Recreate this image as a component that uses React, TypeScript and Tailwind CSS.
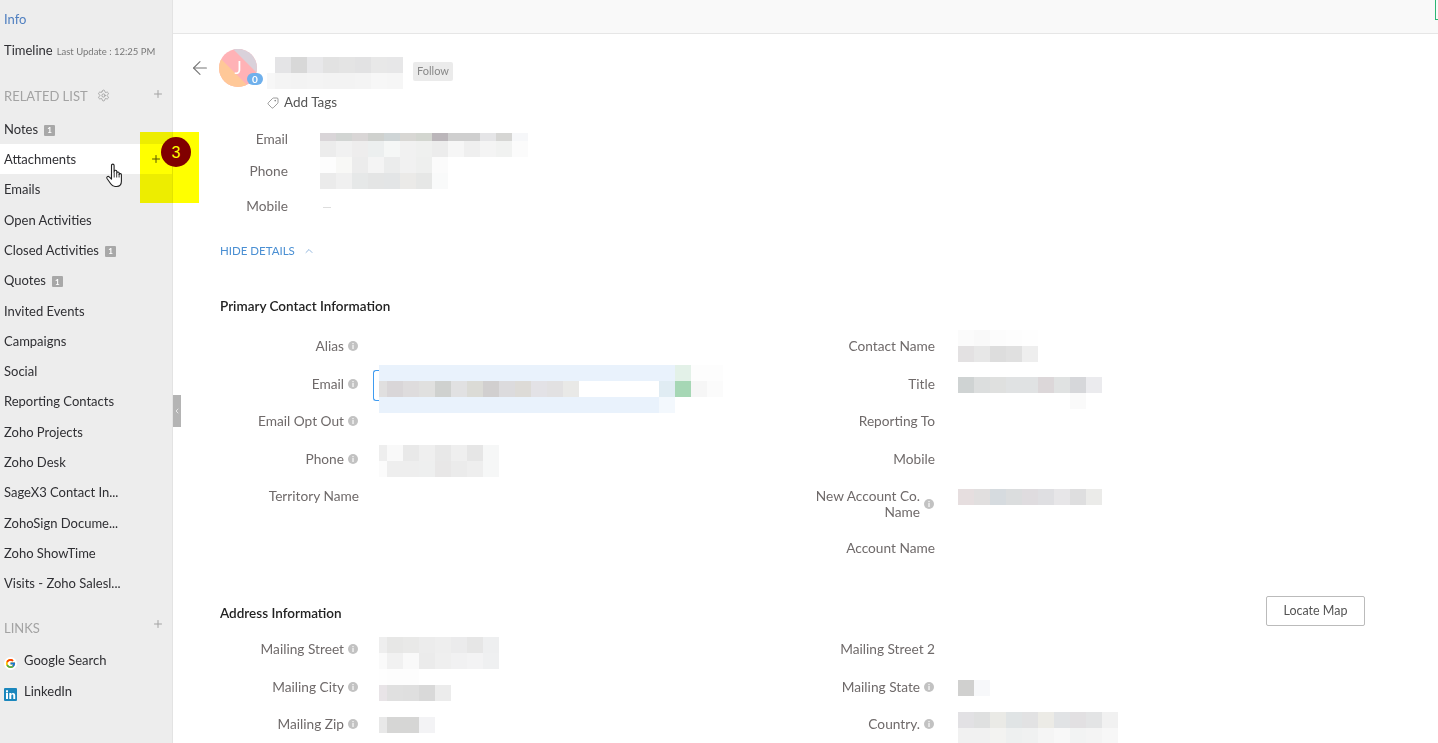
import React from "react";
import { Plus, Settings, ChevronUp, ArrowLeft, Tag, ChevronLeft } from "lucide-react";
import { FcGoogle } from "react-icons/fc";

type MRow = { c: string[]; first?: number; h?: number; skip?: number };

function Mosaic({ rows, top = 0, size = 16 }: { rows: MRow[]; top?: number; size?: number }) {
  return (
    <div className="flex flex-col" style={{ marginTop: top }}>
      {rows.map((r, i) => (
        <div key={i} className="flex shrink-0" style={{ height: r.h ?? size, marginLeft: r.skip ?? 0 }}>
          {r.c.map((col, j) => (
            <div
              key={j}
              className="shrink-0"
              style={{ backgroundColor: "#" + col, width: j === 0 && r.first ? r.first : size }}
            />
          ))}
        </div>
      ))}
    </div>
  );
}

function Info() {
  return (
    <span className="mr-[1px] inline-flex h-[10px] w-[10px] shrink-0 items-center justify-center rounded-full bg-[#c2c2c2] text-[8px] font-bold leading-none text-white">
      i
    </span>
  );
}

function Field({
  label,
  info,
  h = 37.5,
  children,
  right,
}: {
  label: React.ReactNode;
  info?: boolean;
  h?: number;
  children?: React.ReactNode;
  right?: boolean;
}) {
  return (
    <div className="flex" style={{ height: h }}>
      <div className="flex w-[139px] shrink-0 items-center justify-end gap-[4px] self-start text-right text-[13.7px] leading-[16px] text-[#6f6a6a]">
        <span className="py-[2px]">{label}</span>
        {info && <Info />}
      </div>
      <div className={right ? "ml-[23px] min-w-0" : "ml-[20px] min-w-0"}>{children}</div>
    </div>
  );
}

function SideRow({
  label,
  badge,
  active,
}: {
  label: string;
  badge?: boolean;
  active?: boolean;
}) {
  return (
    <div className={`flex h-[30.3px] items-center pl-[4px] pt-[2px] ${active ? "bg-white" : ""}`}>
      <span className="text-[13px] text-[#2f2f33]">{label}</span>
      {badge && (
        <span className="ml-[6px] mt-[1px] flex h-[11px] w-[11px] items-center justify-center rounded-[1px] bg-[#a8a8a8] text-[8px] font-bold leading-none text-white">
          1
        </span>
      )}
      {active && <Plus className="ml-auto mr-[10px] -mt-[2px] text-[#555]" size={12} strokeWidth={2} />}
    </div>
  );
}

const items: { label: string; badge?: boolean; active?: boolean }[] = [
  { label: "Notes", badge: true },
  { label: "Attachments", active: true },
  { label: "Emails" },
  { label: "Open Activities" },
  { label: "Closed Activities", badge: true },
  { label: "Quotes", badge: true },
  { label: "Invited Events" },
  { label: "Campaigns" },
  { label: "Social" },
  { label: "Reporting Contacts" },
  { label: "Zoho Projects" },
  { label: "Zoho Desk" },
  { label: "SageX3 Contact In..." },
  { label: "ZohoSign Docume..." },
  { label: "Zoho ShowTime" },
  { label: "Visits - Zoho Salesl..." },
];

function Sidebar() {
  return (
    <aside className="relative h-[743px] w-[173px] shrink-0 border-r border-[#e3e3e3] bg-[#ededed]">
      <div className="flex h-[38px] items-center pl-[4px] pt-[2px] text-[13px] text-[#4f7fc0]">Info</div>
      <div className="flex h-[24px] items-center pl-[4px] pt-[2px]">
        <span className="text-[13px] text-[#2f2f33]">Timeline</span>
        <span className="ml-[4px] mt-[2px] text-[9.5px] text-[#777]">Last Update : 12:25 PM</span>
      </div>
      <div className="mt-[22px] flex h-[24px] items-center pl-[4px] pt-[2px]">
        <span className="text-[13px] text-[#a3a3a3]">RELATED LIST</span>
        <Settings className="ml-[9px] -mt-[4px] text-[#999]" size={13} strokeWidth={1.5} />
        <Plus className="ml-auto mr-[8px] -mt-[6px] text-[#a3a3a3]" size={12} strokeWidth={2} />
      </div>
      <div className="mt-[5.4px]">
        {items.map((it) => (
          <SideRow key={it.label} {...it} />
        ))}
      </div>
      <div className="mt-[17.9px] flex h-[24px] items-center pl-[4px] pt-[2px]">
        <span className="text-[13px] text-[#a3a3a3]">LINKS</span>
        <Plus className="ml-auto mr-[8px] -mt-[10px] text-[#a3a3a3]" size={12} strokeWidth={2} />
      </div>
      <div className="mt-[5px] flex h-[31px] items-center pl-[4px]">
        <span className="mt-[5px] flex h-[13px] w-[13px] items-center justify-center rounded-full bg-white">
          <FcGoogle size={11} />
        </span>
        <span className="ml-[7px] text-[13px] text-[#2f2f33]">Google Search</span>
      </div>
      <div className="flex h-[31px] items-center pl-[4px]">
        <svg className="mt-[5px]" width="13" height="13" viewBox="0 0 13 13">
          <rect width="13" height="13" rx="1" fill="#1b87bd" />
          <rect x="2" y="5" width="2" height="6" fill="#fff" />
          <rect x="2" y="2.3" width="2" height="2" fill="#fff" />
          <path d="M5.3 5h1.9v.9C7.600 5.300 8.300 4.900 9.100 4.900c1.500 0 2.100.9 2.100 2.400V11H9.300V7.700c0-.7-.3-1.200-.9-1.200s-1.100.5-1.100 1.200V11H5.300z" fill="#fff" />
        </svg>
        <span className="ml-[7px] text-[13px] text-[#2f2f33]">LinkedIn</span>
      </div>

      <div className="absolute left-[173px] top-[395px] flex h-[32px] w-[8px] items-center justify-center bg-[#b4b4b4] text-white">
        <ChevronLeft size={8} strokeWidth={2} />
      </div>
    </aside>
  );
}

function Avatar() {
  return (
    <div className="relative h-[38px] w-[38px] shrink-0">
      <svg width="38" height="38" viewBox="0 0 38 38" className="block">
        <defs>
          <clipPath id="av">
            <circle cx="19" cy="19" r="19" />
          </clipPath>
        </defs>
        <g clipPath="url(#av)">
          <rect width="38" height="38" fill="#ffb2b6" />
          <path d="M14 0 L38 0 L38 24 Z" fill="#d9d1da" />
          <path d="M0 8 L30 38 L0 38 Z" fill="#ffc898" />
        </g>
      </svg>
      <span className="absolute inset-0 flex items-center justify-center text-[17px] text-white">J</span>
      <span className="absolute left-[28px] top-[24px] flex h-[12px] w-[16px] items-center justify-center rounded-full bg-[#6fb0ec] text-[10px] font-bold leading-none text-white">
        0
      </span>
    </div>
  );
}

const f = (s: string) => s.split(" ");

function Main() {
  return (
    <main className="relative min-w-0 flex-1">
      <div className="h-[34px] border-b border-[#e6e6e6] bg-[#f9f9f9]" />
      <div className="absolute right-0 top-0 h-[20px] w-[3px] border-b border-l border-[#2bb673]" />

      <div className="flex pl-[16px] pt-[15px]">
        <ArrowLeft className="mt-[8px] text-[#777]" size={22} strokeWidth={1.2} />
        <div className="ml-[8px]">
          <Avatar />
        </div>
        <div className="ml-[10px] mt-[8px] flex flex-col">
          <Mosaic
            rows={[
              { skip: 8, c: f("e4e4e6 d8d8d8 e8e8ea e2e2e2 e4e4e4 e2e2e3 e8e8e8 e7e7e8") },
              { first: 8, c: f("f7f7f7 f4f4f4 f3f3f3 f4f4f4 f3f3f3 f3f3f3 f4f4f4 f7f7f7 f6f6f6") },
            ]}
          />
        </div>
        <div className="ml-[10px] mt-[13px] flex h-[19px] w-[40px] items-center justify-center rounded-[2px] bg-[#ebebeb] text-[11px] text-[#888]">
          Follow
        </div>
      </div>
      <div className="mt-[1px] flex h-[25px] items-center pl-[94px] text-[13.5px] text-[#555]">
        <Tag className="-scale-x-100 text-[#666]" size={12} strokeWidth={1.3} />
        <span className="ml-[5px]">Add Tags</span>
      </div>

      <div className="mt-[14px] flex">
        <div className="flex w-[115px] flex-col items-end text-[13.7px] leading-[20px] text-[#6f6a6a]">
          <div className="h-[32px]">Email</div>
          <div className="h-[35px]">Phone</div>
          <div>Mobile</div>
        </div>
        <div className="ml-[32px] mt-[4px] flex flex-col">
          <Mosaic
            rows={[
              { h: 8, c: f("d9d5d8 d2d5d3 d9d6d6 cfd1ce cfd5d6 d8d7d4 d3d6d0 bbb6ba cfcfcf cfcfcf e5e5e7 d6d6d4 f6f7f9") },
              { c: f("ececec f1f1f1 eeeded ecefef f5f7f6 f1f1f1 eff0ef ececec f6f6f6 efefef f4f4f4 f1f2f1 fbfbfb") },
              { c: f("fdfdfd f8f8f6 ececec f4f4f4 ebecec f1f1f1 eeefee fbfbfb") },
              { c: f("ebebeb f0f0f0 e6e8e8 e4e5e5 e3e5e6 ebeae8 e6e7e6 f9fafa") },
            ]}
          />
          <div className="ml-[3px] mt-[18px] h-px w-[8px] bg-[#dddddd]" />
        </div>
      </div>

      <div className="mt-[26px] flex h-[18px] items-center pl-[47px] text-[11.5px] text-[#4a8fd3]">
        HIDE DETAILS
        <ChevronUp className="ml-[8px] text-[#6f9fd3]" size={12} strokeWidth={1.5} />
      </div>

      <h2 className="mt-[36px] pl-[47px] text-[13.5px] font-semibold leading-[20px] text-[#222]">
        Primary Contact Information
      </h2>

      <div className="mt-[20px] flex pl-[47px]">
        <div className="w-[576px] shrink-0">
          <Field label="Alias" info />
          <Field label="Email" info>
            <div className="flex">
              <div className="-ml-[6px] mt-[-4px] h-[31px] w-[6px] shrink-0 rounded-l-[3px] border-y border-l border-[#3f9bf0]" />
              <Mosaic
                top={-9}
                rows={[
                  { c: [...Array(19).fill("e9f2fc"), "e3f1e8", "fdfdfd", "fdfdfd"], first: 8 },
                  {
                    first: 8,
                    c: f("e0dfdf d9d6d8 dedcdd e0e0df cfd1cf e1e1e2 dbdbd6 d1cfcf dcdbdd dddbd7 e3e2e6 e2e1e2 e9e9e7 ffffff ffffff ffffff ffffff ffffff e0ecf3 a6d7b5 f6f6f6 fbfbfb"),
                  },
                  { first: 8, c: [...Array(18).fill("e9f2fc"), "f3f8fd"] },
                ]}
              />
            </div>
          </Field>
          <Field label="Email Opt Out" info />
          <Field label="Phone" info>
            <Mosaic
              top={-4}
              rows={[
                { first: 8, c: f("eeeeee f9f9f9 e9e9e9 efefef e8e8e8 efefef e6e6e6 f6f7f7") },
                { first: 8, c: f("fbfbfb eeeeee eeeeee eeefef e8e7e7 ebebeb eeeeee f6f7f7") },
              ]}
            />
          </Field>
          <Field label="Territory Name" />
        </div>
        <div className="w-[500px] shrink-0">
          <Field label="Contact Name" right>
            <Mosaic
              top={-6}
              rows={[
                { c: f("fbfbfb f9f9f9 fcfcfc fdfdfd fefefe") },
                { c: f("e3e1e2 e7e7e7 dddddd e0e0e0 eeeeee") },
              ]}
            />
          </Field>
          <Field label="Title" right>
            <Mosaic
              top={3}
              rows={[
                { c: f("cfd3d3 dcdede dfe0df e0e2e3 e0e2e3 dcd7d9 e0e2e2 d6d7da ebebee") },
                { c: f("ffffff ffffff ffffff ffffff ffffff ffffff ffffff fafafa") },
              ]}
            />
          </Field>
          <Field label="Reporting To" right />
          <Field label="Mobile" right />
          <Field
            h={52}
            right
            label={
              <span className="inline-flex items-center gap-[4px]">
                <span className="block w-[112px]">New Account Co. Name</span>
                <Info />
              </span>
            }
          >
            <Mosaic
              top={3}
              rows={[{ c: f("e6dedf e1dfdf d6dbdf dbddde dfdcdf dfdfe2 e7e6e8 dededf ebebe9") }]}
            />
          </Field>
          <Field label="Account Name" right h={30} />
        </div>
      </div>

      <div className="mt-[15px] flex items-start pl-[47px]">
        <h2 className="mt-[20px] text-[13.5px] font-semibold leading-[20px] text-[#222]">Address Information</h2>
        <button className="ml-auto mr-[73px] mt-[13px] flex h-[30px] w-[99px] items-center justify-center rounded-[2px] border border-[#bbbbbb] bg-white text-[12.5px] text-[#555]">
          Locate Map
        </button>
      </div>

      <div className="mt-[13px] flex pl-[47px]">
        <div className="w-[576px] shrink-0">
          <Field label="Mailing Street" info>
            <Mosaic
              top={-2}
              rows={[
                { first: 8, c: f("eeeeee e7e7e6 e9e9e8 ececec eeeeee ebebec e6e6e6 eeeff0") },
                { first: 8, c: f("fafafa f1f1f1 f9f9f9 ebebeb efefef f1f1f2 f3f3f4 eff0f1") },
              ]}
            />
          </Field>
          <Field label="Mailing City" info>
            <Mosaic
              top={-8}
              rows={[
                { first: 8, c: f("fefefe fdfdfd fdfdfd") },
                { first: 8, c: f("e8e4e7 e0e0e0 dfdfdf d9d9d9 ececec") },
              ]}
            />
          </Field>
          <Field label="Mailing Zip" info>
            <Mosaic top={3} rows={[{ first: 8, c: f("e8e8e8 d6d6d5 d6d6d5 f3f3f5") }]} />
          </Field>
        </div>
        <div className="w-[500px] shrink-0">
          <Field label="Mailing Street 2" right />
          <Field label="Mailing State" info right>
            <Mosaic top={3} rows={[{ c: f("d0d0cf f7f8fa") }]} />
          </Field>
          <Field label="Country." info right>
            <Mosaic
              top={-2}
              rows={[
                { c: f("e2e1e4 dfe0e0 eaeae6 e0e4e5 e2e2e3 ecebe6 e1e3e5 e2e0e2 e3e4e5 f1f1f1") },
                { c: f("f1f1f1 f1f1f1 f3f3f1 eef0f0 f0f1f1 f5f5f5 f8f8f8 f2f3f3 f4f4f4 f7f7f7") },
              ]}
            />
          </Field>
        </div>
      </div>
    </main>
  );
}

export default function App() {
  return (
    <div
      className="relative flex h-[743px] w-[1438px] overflow-hidden bg-white"
      style={{ fontFamily: '"Lato", "Liberation Sans", sans-serif' }}
    >
      <Sidebar />
      <Main />

      {/* highlight annotation */}
      <div className="absolute left-[140px] top-[132px] h-[71px] w-[59px] bg-[#ffff00] mix-blend-multiply" />
      <div className="absolute left-[161px] top-[137px] flex h-[30px] w-[30px] items-center justify-center rounded-full bg-[#800000] pt-[1px] font-['Liberation_Sans'] text-[16px] leading-none text-[#ffff00]">
        3
      </div>
      {/* hand cursor */}
      <svg className="absolute left-[105px] top-[163px]" width="20" height="26" viewBox="0 0 20 26">
        <path
          d="M6.500 2.500c0-1.800 2.600-1.800 2.600 0v7l.2-1.300c.3-1.400 2.400-1.300 2.500.2v1.500c.2-1.300 2.300-1.200 2.400.2v1.300c.2-1.200 2.200-1 2.200.4v6.500c0 3-1.800 5.200-4.700 5.200H10c-2 0-3.200-1-4.300-2.700L2 15.500c-.9-1.500 1-2.900 2.200-1.600l2.300 2.300z"
          fill="#fff"
          stroke="#222"
          strokeWidth="1.100"
          strokeLinejoin="round"
        />
        <path d="M9.200 10v4.500M11.700 10v4.500M14.100 11v3.500" stroke="#222" strokeWidth="0.900" fill="none" />
      </svg>
    </div>
  );
}
